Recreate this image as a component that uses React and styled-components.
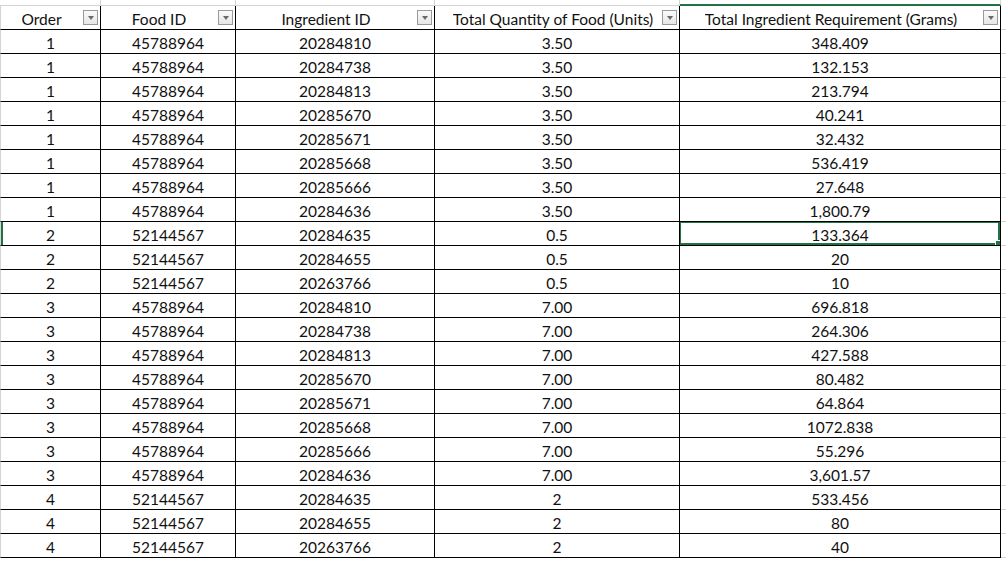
import React from "react";
import styled, { createGlobalStyle } from "styled-components";

const Global = createGlobalStyle`
  html, body { margin: 0; padding: 0; background: #fff; }
  body { font-family: Lato, "Open Sans", sans-serif; }
`;

const cols = "101px 135px 199px 245px 321px 5px";

const Page = styled.div`
  width: 1006px;
  height: 563px;
  overflow: hidden;
  background: #fff;
`;

const TopStrip = styled.div`
  display: grid;
  grid-template-columns: ${cols};
  height: 6px;
`;
const StripCell = styled.div`
  border-right: 1px solid #d4d4d4;
  border-bottom: 1px solid #d4d4d4;
  box-sizing: border-box;
  ${(p) => p.$sel && `border-bottom: 2px solid #217346;`}
`;

const Row = styled.div`
  display: grid;
  grid-template-columns: ${cols};
  height: 24px;
`;

const Cell = styled.div`
  position: relative;
  box-sizing: border-box;
  border-right: 1px solid #000;
  border-bottom: 1px solid #000;
  display: flex;
  align-items: center;
  justify-content: center;
  font-size: 15.5px;
  color: #111;
  white-space: nowrap;
  overflow: hidden;
  padding-top: 2px;
  padding-right: ${(p) => (p.$head ? "18px" : "0")};
  ${(p) => p.$first && `border-left: 1px solid #d4d4d4;`}
`;

const HeadText = styled.span`
  overflow: hidden;
  ${(p) => p.$clip && `flex: 0 0 auto; max-width: 216px; margin-left: 10px; align-self: center;`}
`;

const Filler = styled.div`
  border-bottom: 1px solid #d4d4d4;
  box-sizing: border-box;
`;

const DropBtn = styled.div`
  position: absolute;
  right: 2px;
  top: 4px;
  width: 15px;
  height: 15px;
  box-sizing: border-box;
  border: 1px solid #9a9a9a;
  background: linear-gradient(#fafafa, #e6e6e6);
  display: flex;
  align-items: center;
  justify-content: center;
  &::after {
    content: "";
    border-left: 3.5px solid transparent;
    border-right: 3.5px solid transparent;
    border-top: 4px solid #6a6a6a;
  }
`;

const Selected = styled.div`
  position: absolute;
  inset: -1px 0 0 -1px;
  border: 2px solid #217346;
  pointer-events: none;
  &::after {
    content: "";
    position: absolute;
    right: -4px;
    bottom: -4px;
    width: 5px;
    height: 5px;
    background: #217346;
    border: 1px solid #fff;
  }
`;

const GreenMark = styled.div`
  position: absolute;
  left: 0;
  top: 0;
  bottom: 0;
  width: 2px;
  background: #217346;
`;

const raw = `1 45788964 20284810 3.50 348.409
1 45788964 20284738 3.50 132.153
1 45788964 20284813 3.50 213.794
1 45788964 20285670 3.50 40.241
1 45788964 20285671 3.50 32.432
1 45788964 20285668 3.50 536.419
1 45788964 20285666 3.50 27.648
1 45788964 20284636 3.50 1,800.79
2 52144567 20284635 0.5 133.364
2 52144567 20284655 0.5 20
2 52144567 20263766 0.5 10
3 45788964 20284810 7.00 696.818
3 45788964 20284738 7.00 264.306
3 45788964 20284813 7.00 427.588
3 45788964 20285670 7.00 80.482
3 45788964 20285671 7.00 64.864
3 45788964 20285668 7.00 1072.838
3 45788964 20285666 7.00 55.296
3 45788964 20284636 7.00 3,601.57
4 52144567 20284635 2 533.456
4 52144567 20284655 2 80
4 52144567 20263766 2 40`;
const rows = raw.split("\n").map((l) => l.split(" "));

const heads = [
  "Order",
  "Food ID",
  "Ingredient ID",
  "Total Quantity of Food (Units)",
  "Total Ingredient Requirement (Grams)",
];

export default function App() {
  return (
    <Page>
      <Global />
      <TopStrip>
        {[0, 1, 2, 3, 4].map((i) => (
          <StripCell key={i} $sel={i === 4} />
        ))}
        <div />
      </TopStrip>
      <Row>
        {heads.map((h, i) => (
          <Cell key={h} $head $first={i === 0}>
            <HeadText $clip={i === 3}>{h}</HeadText>
            <DropBtn />
          </Cell>
        ))}
        <Filler />
      </Row>
      {rows.map((r, ri) => (
        <Row key={ri}>
          {r.map((v, ci) => (
            <Cell key={ci} $first={ci === 0}>
              {ci === 0 && ri === 8 && <GreenMark />}
              {v}
              {ci === 4 && ri === 8 && <Selected />}
            </Cell>
          ))}
          <Filler />
        </Row>
      ))}
    </Page>
  );
}
